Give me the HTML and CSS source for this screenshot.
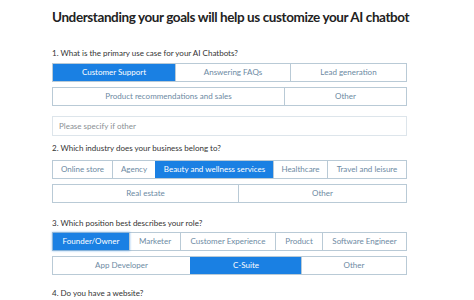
FILE: index.html
```html
<!DOCTYPE html>
<html>
<head>
<meta name="viewport" content="width=device-width, initial-scale=1">
<link rel="stylesheet" href="styles.css">
</head>
<body>

<div class="survey">
  <h1 class="title">Understanding your goals will help us customize your AI chatbot</h1>

  <p class="question q1">1. What is the primary use case for your AI Chatbots?</p>
  <div class="opts r-use1">
    <span class="opt active">Customer Support</span>
    <span class="opt">Answering FAQs</span>
    <span class="opt">Lead generation</span>
  </div>
  <div class="opts r-use2">
    <span class="opt">Product recommendations and sales</span>
    <span class="opt">Other</span>
  </div>
  <input class="other" type="text" placeholder="Please specify if other">

  <p class="question q2">2. Which industry does your business belong to?</p>
  <div class="opts r-ind1">
    <span class="opt">Online store</span>
    <span class="opt">Agency</span>
    <span class="opt active">Beauty and wellness services</span>
    <span class="opt">Healthcare</span>
    <span class="opt">Travel and leisure</span>
  </div>
  <div class="opts r-ind2">
    <span class="opt">Real estate</span>
    <span class="opt">Other</span>
  </div>

  <p class="question q3">3. Which position best describes your role?</p>
  <div class="opts r-role1">
    <span class="opt active glow">Founder/Owner</span>
    <span class="opt">Marketer</span>
    <span class="opt">Customer Experience</span>
    <span class="opt">Product</span>
    <span class="opt">Software Engineer</span>
  </div>
  <div class="opts r-role2">
    <span class="opt">App Developer</span>
    <span class="opt active">C-Suite</span>
    <span class="opt">Other</span>
  </div>

  <p class="question q4">4. Do you have a website?</p>
</div>

</body>
</html>
```

FILE: styles.css
```css
body, html {
  margin: 0;
  background: #fff;
  font-family: Lato, "Open Sans", Arial, sans-serif;
}

.survey {
  width: 355px;
  padding: 8px 0 0 52px;
  display: flex;
  flex-direction: column;
}

.title {
  font-size: 13.5px;
  font-weight: 700;
  color: #222;
  margin: 0;
  line-height: 18px;
  letter-spacing: -0.4px;
  white-space: nowrap;
}

.question {
  font-size: 8px;
  color: #333;
  margin: 0;
  line-height: 12px;
}
.q1 { margin-top: 21px; margin-bottom: 4px; }
.q2 { margin-top: 6px; margin-bottom: 6px; }
.q3 { margin-top: 9px; margin-bottom: 3px; }
.q4 { margin-top: 7px; }

.opts {
  display: grid;
  border: 1px solid #b9cad6;
  height: 17px;
  margin-bottom: 5px;
}
.r-use1 { grid-template-columns: 122px 115px 1fr; }
.r-use2 { grid-template-columns: 231px 1fr; }
.r-ind1 { grid-template-columns: 59px 43px 118px 54px 1fr; }
.r-ind2 { grid-template-columns: 185px 1fr; }
.r-role1 { grid-template-columns: 76px 51px 95px 47px 1fr; }
.r-role2 { grid-template-columns: 137px 111px 1fr; }

.opt {
  font-size: 8px;
  color: #6d8aa3;
  text-align: center;
  line-height: 17px;
  border-left: 1px solid #b9cad6;
  white-space: nowrap;
}
.opt:first-child { border-left: none; }
.opt.active {
  background: #1a80e3;
  color: #fff;
  border-left-color: #1a80e3;
}
.opt.glow { box-shadow: 0 0 2px 1px rgba(26, 128, 227, 0.45); }

.other {
  height: 20px;
  box-sizing: border-box;
  border: 1px solid #dde5eb;
  margin: 5px 0 0;
  padding: 0 6px;
  font-family: inherit;
  font-size: 8px;
  outline: none;
}
.other::placeholder { color: #8a8f94; }
```
